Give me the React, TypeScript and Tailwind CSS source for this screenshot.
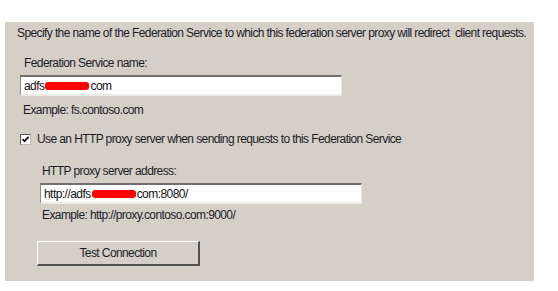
function Redact({ w }: { w: number }) {
  return (
    <span
      className="inline-block h-[8px] bg-[#ff0000] rounded-[3px] align-middle mx-[1px]"
      style={{ width: w }}
    />
  );
}

function Field({ width, children }: { width: string; children: React.ReactNode }) {
  return (
    <div
      className={`${width} h-[21px] bg-white border-t-2 border-l border-t-[#6f6f6f] border-l-[#8a8a8a] border-r border-b-2 border-r-[#e8e6e0] border-b-[#ecebe6] flex items-center pl-[3px] text-[12px] tracking-[-0.55px] text-[#111] whitespace-nowrap`}
    >
      {children}
    </div>
  );
}

export default function App() {
  return (
    <div className="w-[558px] h-[291px] bg-white pt-[22px] pl-[5px] font-['Liberation_Sans',Arial,sans-serif]">
      <div className="w-[529px] h-[259px] bg-[#d4d0c8] text-[#1c1c28] text-[12px] tracking-[-0.6px] pt-[4px] whitespace-nowrap">
        <div className="pl-[12px] leading-[14px]">
          Specify the name of the Federation Service to which this federation server proxy will redirect&nbsp; client requests.
        </div>
        <div className="pl-[19px] mt-[16px] leading-[14px]">Federation Service name:</div>
        <div className="pl-[15px] mt-[5px]">
          <Field width="w-[322px]">
            adfs
            <Redact w={44} />
            com
          </Field>
        </div>
        <div className="pl-[18px] mt-[7px] leading-[14px]">Example: fs.contoso.com</div>
        <div className="pl-[15px] mt-[15px] flex items-center gap-[6px] leading-[14px]">
          <span className="w-[11px] h-[11px] bg-white border border-t-[#555] border-l-[#555] border-r-[#bbb] border-b-[#bbb] flex items-center justify-center">
            <svg viewBox="0 0 9 9" className="w-[9px] h-[9px]">
              <path d="M1.5 4.2 L3.5 6.3 L7.6 1.8" fill="none" stroke="#111" strokeWidth="1.8" />
            </svg>
          </span>
          <span>Use an HTTP proxy server when sending requests to this Federation Service</span>
        </div>
        <div className="pl-[37px] mt-[18px] leading-[14px]">HTTP proxy server address:</div>
        <div className="pl-[35px] mt-[5px]">
          <Field width="w-[322px]">
            http://adfs
            <Redact w={44} />
            com:8080/
          </Field>
        </div>
        <div className="pl-[37px] mt-[4px] leading-[14px]">Example: http://proxy.contoso.com:9000/</div>
        <div className="pl-[32px] mt-[19px]">
          <button className="w-[163px] h-[25px] bg-[#d4d0c8] border-t border-l border-t-[#fbfbf8] border-l-[#fbfbf8] border-r-2 border-b-2 border-r-[#505050] border-b-[#505050] text-[12px] tracking-[-0.6px] text-[#1c1c28] flex items-center justify-center">
            Test Connection
          </button>
        </div>
      </div>
    </div>
  );
}
